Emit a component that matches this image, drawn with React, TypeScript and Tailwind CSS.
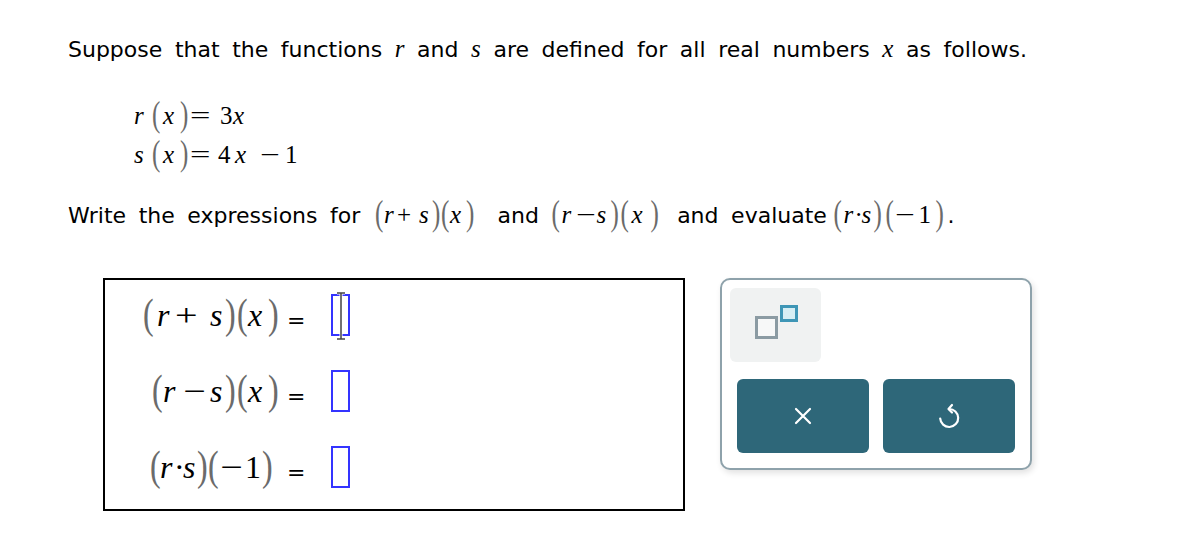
import React from "react";

type Kind = "v" | "p" | "o";
type G = [string, Kind, number, string?];

const SERIF = "[font-family:Liberation_Serif,Times_New_Roman,serif]";

function MathSeq({ glyphs, className = "" }: { glyphs: G[]; className?: string }) {
  return (
    <span className={"inline-flex items-baseline text-black [word-spacing:0px] " + SERIF + " " + className}>
      {glyphs.map(([c, k, w, extra], i) => {
        let cls = "inline-block whitespace-pre ";
        if (k === "v") cls += "italic ";
        if (k === "p") cls += "text-[#6b6b6b] ";
        if (extra) cls += extra;
        return (
          <span key={i} className={cls} style={{ width: w }}>
            {c}
          </span>
        );
      })}
    </span>
  );
}

const PS = "scale-y-[1.4] origin-[50%_60%]";
const PR = "scale-y-[1.35] origin-[50%_60%]";
const EQ = "scale-x-[1.45] origin-left";
const MINUS = "scale-x-[1.4] origin-left";
const DOT = "text-center";

function InputBox({ cursor = false }: { cursor?: boolean }) {
  return (
    <div className="relative w-[19px] h-[42px] border-2 border-[#3434ff]">
      {cursor && (
        <svg className="absolute left-[1px] top-[-5px]" width="14" height="50" viewBox="0 0 14 50">
          <path d="M3 2 L11 2 M7 2 L7 48 M3 48 L11 48" stroke="#ffffff" strokeWidth="3" fill="none" />
          <path d="M3 2 L11 2 M7 2 L7 48 M3 48 L11 48" stroke="#444" strokeWidth="1.5" fill="none" />
        </svg>
      )}
    </div>
  );
}

function Row({ glyphs, pl, cursor = false }: { glyphs: G[]; pl: string; cursor?: boolean }) {
  return (
    <div className="flex items-center h-[42px]">
      <div className={"w-[182px] flex items-center " + pl}>
        <MathSeq glyphs={glyphs} className="text-[32px] leading-[42px]" />
      </div>
      <span className="text-[22px] leading-none mt-[12px]">=</span>
      <div className="ml-[26px]">
        <InputBox cursor={cursor} />
      </div>
    </div>
  );
}

const Var = ({ c }: { c: string }) => (
  <span className={SERIF + " italic text-[25px]"}>{c}</span>
);

export default function App() {
  return (
    <div className="w-[1190px] h-[533px] bg-white [font-family:DejaVu_Sans,Verdana,sans-serif] text-[22px] leading-[28px] text-black pl-[68px] pt-[35px] [word-spacing:5.6px]">
      <p className="whitespace-nowrap">
        Suppose that the functions <Var c="r" /> and <Var c="s" /> are defined for all real numbers{" "}
        <Var c="x" /> as follows.
      </p>

      <div className="ml-[66px] mt-[32px]">
        <div className="h-[39px] flex items-center">
          <MathSeq
            className="text-[25px]"
            glyphs={[
              ["r", "v", 18],
              ["(", "p", 11, PS],
              ["x", "v", 17],
              [")", "p", 10, PS],
              ["=", "o", 30, EQ],
              ["3", "o", 13],
              ["x", "v", 17],
            ]}
          />
        </div>
        <div className="h-[39px] flex items-center">
          <MathSeq
            className="text-[25px]"
            glyphs={[
              ["s", "v", 18],
              ["(", "p", 11, PS],
              ["x", "v", 17],
              [")", "p", 10, PS],
              ["=", "o", 28, EQ],
              ["4", "o", 17],
              ["x", "v", 25],
              ["−", "o", 25, MINUS],
              ["1", "o", 12],
            ]}
          />
        </div>
      </div>

      <p className="mt-[27px] whitespace-nowrap">
        Write the expressions for{" "}
        <MathSeq
          className="text-[25px] ml-[2px] mr-[12px]"
          glyphs={[
            ["(", "p", 9, PS],
            ["r", "v", 13],
            ["+", "o", 22],
            ["s", "v", 13],
            [")", "p", 9, PS],
            ["(", "p", 9, PS],
            ["x", "v", 16],
            [")", "p", 7, PS],
          ]}
        />{" "}
        and{" "}
        <MathSeq
          className="text-[25px] mr-[6px]"
          glyphs={[
            ["(", "p", 10, PS],
            ["r", "v", 14],
            ["−", "o", 21, MINUS],
            ["s", "v", 14],
            [")", "p", 10, PS],
            ["(", "p", 11, PS],
            ["x", "v", 19],
            [")", "p", 8, PS],
          ]}
        />{" "}
        and evaluate{" "}
        <MathSeq
          className="text-[25px] ml-[-6px] mr-[2px]"
          glyphs={[
            ["(", "p", 10, PS],
            ["r", "v", 11],
            ["·", "o", 7, DOT],
            ["s", "v", 12],
            [")", "p", 12, PS],
            ["(", "p", 10, PS],
            ["−", "o", 23, MINUS],
            ["1", "o", 17],
            [")", "p", 10, PS],
          ]}
        />
        .
      </p>

      <div className="flex items-start mt-[48px] [word-spacing:0px]">
        <div className="ml-[35px] w-[582px] h-[233px] border-2 border-black flex flex-col gap-[34px] pt-[14px]">
          <Row
            cursor
            pl="pl-[38px]"
            glyphs={[
              ["(", "p", 14, PR],
              ["r", "v", 18],
              ["+", "o", 35, "scale-x-[1.25] origin-left"],
              ["s", "v", 15],
              [")", "p", 12, PR],
              ["(", "p", 11, PR],
              ["x", "v", 20],
              [")", "p", 8, PR],
            ]}
          />
          <Row
            pl="pl-[47px]"
            glyphs={[
              ["(", "p", 11, PR],
              ["r", "v", 20],
              ["−", "o", 27, "scale-x-[1.25] origin-left"],
              ["s", "v", 15],
              [")", "p", 12, PR],
              ["(", "p", 11, PR],
              ["x", "v", 20],
              [")", "p", 8, PR],
            ]}
          />
          <Row
            pl="pl-[45px]"
            glyphs={[
              ["(", "p", 10, PR],
              ["r", "v", 14],
              ["·", "o", 9, DOT],
              ["s", "v", 14],
              [")", "p", 11, PR],
              ["(", "p", 12, PR],
              ["−", "o", 25, "scale-x-[1.25] origin-left"],
              ["1", "o", 17],
              [")", "p", 8, PR],
            ]}
          />
        </div>

        <div className="ml-[35px] w-[312px] h-[192px] border-2 border-[#8ea2ab] rounded-[10px] p-[8px] pb-[14px] shadow-[2px_3px_6px_rgba(0,0,0,0.12)] bg-white">
          <div className="w-[91px] h-[74px] bg-[#f0f2f2] rounded-[6px] relative">
            <div className="absolute left-[25px] top-[28px] w-[23px] h-[23px] border-[3px] border-[#8b9ba3] bg-[#f7f8f8]" />
            <div className="absolute left-[50px] top-[17px] w-[18px] h-[17px] border-[3px] border-[#3e96b6] bg-[#d6eef4]" />
          </div>
          <div className="flex gap-[14px] mt-[17px] ml-[7px]">
            <button className="w-[132px] h-[74px] bg-[#2e6779] rounded-[6px] flex items-center justify-center">
              <svg width="20" height="20" viewBox="0 0 20 20">
                <path d="M3 3 L17 17 M17 3 L3 17" stroke="white" strokeWidth="2.2" strokeLinecap="round" />
              </svg>
            </button>
            <button className="w-[132px] h-[74px] bg-[#2e6779] rounded-[6px] flex items-center justify-center">
              <svg width="26" height="28" viewBox="0 0 26 28">
                <path d="M13 7 A9 9 0 1 1 4.2 16.5" stroke="white" strokeWidth="2.2" fill="none" strokeLinecap="round" />
                <path d="M16 3 L12.5 7 L16 10.5" stroke="white" strokeWidth="2.2" fill="none" strokeLinecap="round" strokeLinejoin="round" />
              </svg>
            </button>
          </div>
        </div>
      </div>
    </div>
  );
}
